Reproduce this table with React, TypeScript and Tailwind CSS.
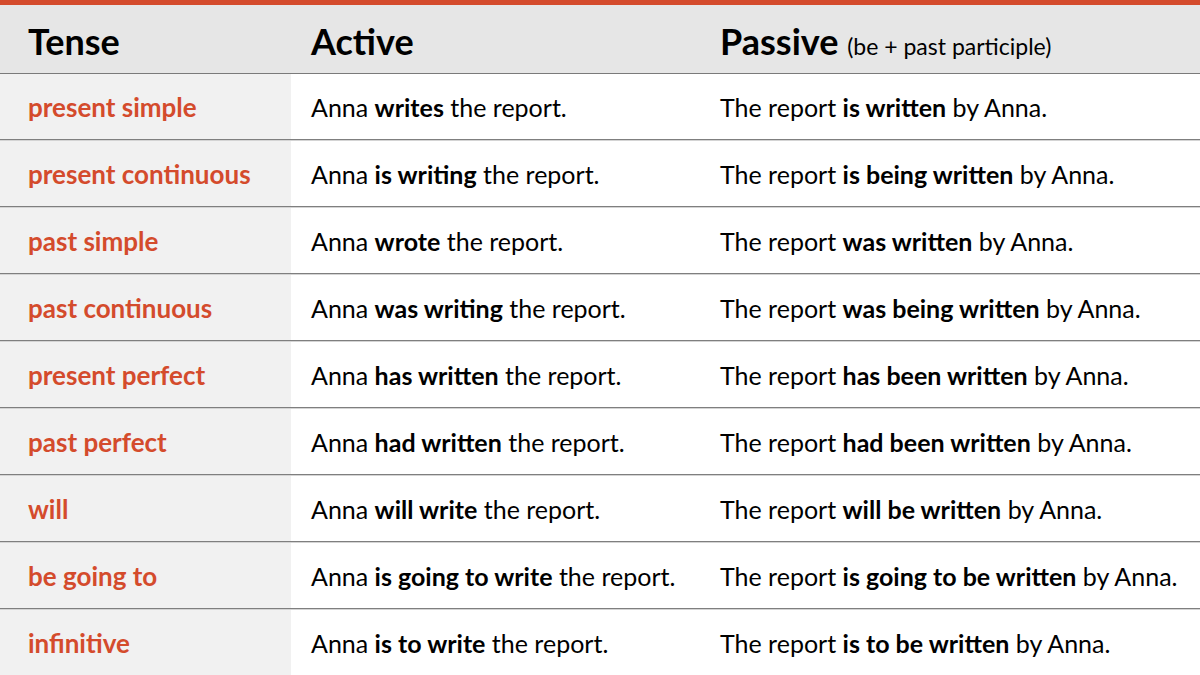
import React from "react";

type Row = { tense: string; a: [string, string, string]; p: [string, string, string] };

const rows: Row[] = [
  { tense: "present simple", a: ["Anna ", "writes", " the report."], p: ["The report ", "is written", " by Anna."] },
  { tense: "present continuous", a: ["Anna ", "is writing", " the report."], p: ["The report ", "is being written", " by Anna."] },
  { tense: "past simple", a: ["Anna ", "wrote", " the report."], p: ["The report ", "was written", " by Anna."] },
  { tense: "past continuous", a: ["Anna ", "was writing", " the report."], p: ["The report ", "was being written", " by Anna."] },
  { tense: "present perfect", a: ["Anna ", "has written", " the report."], p: ["The report ", "has been written", " by Anna."] },
  { tense: "past perfect", a: ["Anna ", "had written", " the report."], p: ["The report ", "had been written", " by Anna."] },
  { tense: "will", a: ["Anna ", "will write", " the report."], p: ["The report ", "will be written", " by Anna."] },
  { tense: "be going to", a: ["Anna ", "is going to write", " the report."], p: ["The report ", "is going to be written", " by Anna."] },
  { tense: "infinitive", a: ["Anna ", "is to write", " the report."], p: ["The report ", "is to be written", " by Anna."] },
];

export default function App() {
  return (
    <div
      className="w-[1200px] h-[675px] overflow-hidden bg-white text-black"
      style={{ fontFamily: "Lato, 'Noto Sans', sans-serif" }}
    >
      <div className="h-[5px] bg-[#d44b2c]" />
      <div className="grid grid-cols-[291px_409px_500px] h-[69px] bg-[#e6e6e6] border-b border-[#7a7a7a] items-center pt-[4px]">
        <div className="pl-[28px] text-[36px] font-bold">Tense</div>
        <div className="pl-[20px] text-[36px] font-bold">Active</div>
        <div className="pl-[20px] text-[36px] font-bold">
          Passive <span className="text-[23px] font-normal">(be + past participle)</span>
        </div>
      </div>
      {rows.map((r, i) => (
        <div key={i} className="h-[67px] flex flex-col">
          <div className="grid grid-cols-[291px_409px_500px] flex-1 text-[25px]">
            <div className="bg-[#f1f1f1] flex items-center pl-[28px] pt-[2px] text-[#d44b2c] font-bold text-[26px]">{r.tense}</div>
            <div className="flex items-center pl-[20px] pt-[2px]">
              <span className="whitespace-pre">
                {r.a[0]}
                <b>{r.a[1]}</b>
                {r.a[2]}
              </span>
            </div>
            <div className="flex items-center pl-[20px] pt-[2px]">
              <span className="whitespace-pre">
                {r.p[0]}
                <b>{r.p[1]}</b>
                {r.p[2]}
              </span>
            </div>
          </div>
          <div className="h-px bg-[#7f7f7f]" />
          <div className="h-px bg-[#d4d4d4]" />
        </div>
      ))}
    </div>
  );
}
